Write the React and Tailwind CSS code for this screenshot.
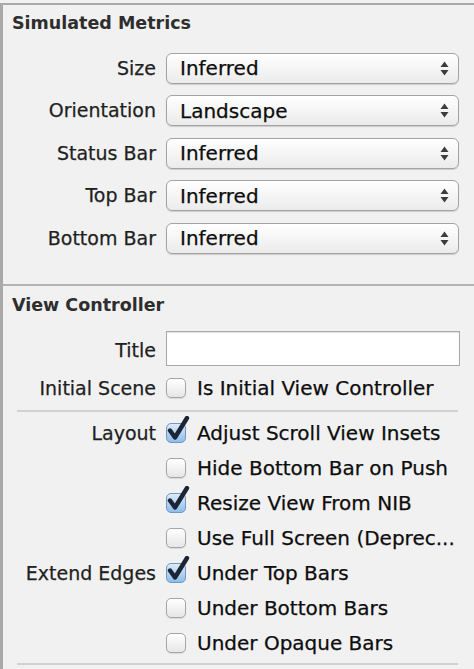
import React from "react";

const font = { fontFamily: '"DejaVu Sans", "Liberation Sans", sans-serif' };

const Arrows = () => (
  <svg width="9" height="15" viewBox="0 0 9 15">
    <path d="M4.5 0.5 L8.5 6 L0.5 6 Z" fill="#3c3c3c" />
    <path d="M4.5 14.5 L8.5 9 L0.5 9 Z" fill="#3c3c3c" />
  </svg>
);

const SelectRow = ({ label, value }) => (
  <div className="flex items-center h-[31px]">
    <div className="w-[153px] text-right text-[19px] text-[#1f1f1f] leading-none [-webkit-text-stroke:0.25px_#1f1f1f]">{label}</div>
    <div className="ml-[10px] w-[293px] h-[31px] flex items-center justify-between pl-[13px] pr-[9px] rounded-[6px] border border-[#a3a3a3] bg-gradient-to-b from-white to-[#ebebeb] shadow-[0_1px_1px_rgba(0,0,0,0.15)]">
      <span className="text-[20px] text-[#0d0d0d] leading-none [-webkit-text-stroke:0.25px_#0d0d0d]">{value}</span>
      <Arrows />
    </div>
  </div>
);

const Checkbox = ({ checked }) => (
  <div className="relative w-[20px] h-[20px] shrink-0">
    <div
      className={
        checked
          ? "w-[20px] h-[20px] rounded-[5px] border border-[#6f98c2] bg-gradient-to-b from-[#dcebf9] to-[#8dbeeb]"
          : "w-[20px] h-[20px] rounded-[5px] border border-[#a5a5a5] bg-gradient-to-b from-white to-[#e6e6e6] shadow-[0_1px_1px_rgba(0,0,0,0.1)]"
      }
    />
    {checked && (
      <svg className="absolute left-[1px] top-[-7px]" width="23" height="25" viewBox="0 0 23 25">
        <path
          d="M3 14.5 L8 21.5 L20 2"
          fill="none"
          stroke="#1b2536"
          strokeWidth="4.4"
          strokeLinecap="round"
          strokeLinejoin="round"
        />
      </svg>
    )}
  </div>
);

const CheckRow = ({ label, text, checked }) => (
  <div className="flex items-center h-[24px]">
    <div className="w-[153px] text-right text-[19px] text-[#1f1f1f] leading-none [-webkit-text-stroke:0.25px_#1f1f1f]">{label}</div>
    <div className="ml-[10px]">
      <Checkbox checked={checked} />
    </div>
    <span className="ml-[11px] text-[20px] text-[#0d0d0d] leading-none whitespace-nowrap [-webkit-text-stroke:0.25px_#0d0d0d]">{text}</span>
  </div>
);

export default function App() {
  return (
    <div className="w-[474px] h-[669px] bg-[#f1f1f1] pt-[3px] overflow-hidden" style={font}>
      <div className="h-full border-t-2 border-l-[3px] border-[#a9a9a9]">
        <div className="border-b-2 border-[#b3b3b3] pb-[30.5px]">
          <div className="pt-[6px] pl-[9px] h-[30px] text-[17.5px] font-bold text-[#2e2e2e] leading-[24px]">
            Simulated Metrics
          </div>
          <div className="mt-[17.5px] flex flex-col gap-[11.5px]">
            <SelectRow label="Size" value="Inferred" />
            <SelectRow label="Orientation" value="Landscape" />
            <SelectRow label="Status Bar" value="Inferred" />
            <SelectRow label="Top Bar" value="Inferred" />
            <SelectRow label="Bottom Bar" value="Inferred" />
          </div>
        </div>

        <div className="pt-[7px] pl-[9px] h-[30px] text-[17.5px] font-bold text-[#2e2e2e] leading-[24px]">
          View Controller
        </div>
        <div className="mt-[15px] flex items-center h-[35px]">
          <div className="w-[153px] text-right text-[19px] text-[#1f1f1f] leading-none pt-[3px] [-webkit-text-stroke:0.25px_#1f1f1f]">Title</div>
          <div className="ml-[10px] w-[294px] h-[35px] bg-white border border-[#a8a8a8] shadow-[inset_0_1px_1px_rgba(0,0,0,0.12)]" />
        </div>
        <div className="mt-[10px]">
          <CheckRow label="Initial Scene" text="Is Initial View Controller" checked={false} />
        </div>
        <div className="mt-[10px] ml-[14px] w-[441px] h-[2px] bg-[#d2d2d2]" />
        <div className="mt-[9px] flex flex-col gap-[11px]">
          <CheckRow label="Layout" text="Adjust Scroll View Insets" checked />
          <CheckRow label="" text="Hide Bottom Bar on Push" checked={false} />
          <CheckRow label="" text="Resize View From NIB" checked />
          <CheckRow label="" text="Use Full Screen (Deprec..." checked={false} />
          <CheckRow label="Extend Edges" text="Under Top Bars" checked />
          <CheckRow label="" text="Under Bottom Bars" checked={false} />
          <CheckRow label="" text="Under Opaque Bars" checked={false} />
        </div>
        <div className="mt-[8px] ml-[14px] w-[441px] h-[2px] bg-[#d2d2d2]" />
      </div>
    </div>
  );
}
